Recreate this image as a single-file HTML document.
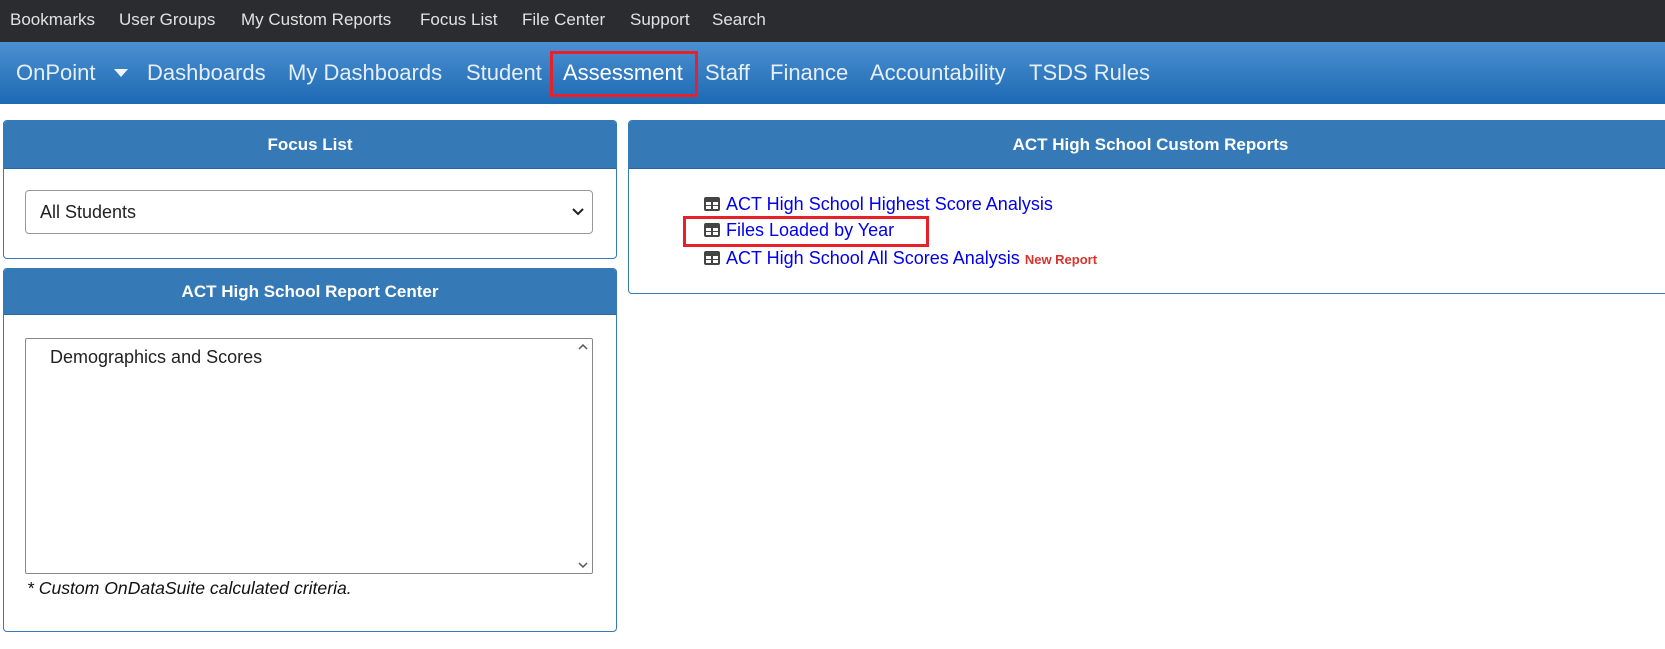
<!DOCTYPE html>
<html><head><style>
*{box-sizing:border-box;margin:0;padding:0}
body{width:1665px;height:649px;background:#fff;font-family:"Liberation Sans",Arial,sans-serif;position:relative;overflow:hidden}
.top{position:absolute;left:0;top:0;width:1665px;height:42px;background:#2b2c30}
.top span{position:absolute;top:10px;color:#e2e2e2;font-size:17px}
.nav{position:absolute;left:0;top:42px;width:1665px;height:62px;background:linear-gradient(#4b90d1,#1d69b3)}
.nav span{position:absolute;top:18px;color:#e6eef8;font-size:22px}
.red{position:absolute;border:3px solid #e8202a}
.panel{position:absolute;border:1px solid #3579b6;border-radius:4px;background:#fff;overflow:hidden}
.ph{background:#357ab6;color:#fff;font-weight:bold;font-size:17px;text-align:center;border-bottom:1px solid #2a66a0}
.sel{position:absolute;border:1px solid #999;border-radius:4px;font-size:18px;color:#222}
a{color:#0000ee;text-decoration:none;font-size:18px}
.ln{position:absolute;left:704px;font-size:18px}
.ic{display:inline-block;width:16px;height:14px;background:#444;border-radius:2px;vertical-align:-1px;margin-right:6px;position:relative}
.ic:after{content:"";position:absolute;left:2px;top:5px;width:12px;height:7px;background:linear-gradient(90deg,#fff 5px,#444 5px,#444 7px,#fff 7px);}
.ic:before{content:"";position:absolute;left:2px;top:8px;width:12px;height:1px;background:#444;z-index:2}
</style></head><body>
<div class="top">
<span style="left:10px">Bookmarks</span><span style="left:119px">User Groups</span><span style="left:241px">My Custom Reports</span><span style="left:420px">Focus List</span><span style="left:522px">File Center</span><span style="left:630px">Support</span><span style="left:712px">Search</span>
</div>
<div class="nav">
<span style="left:16px">OnPoint</span>
<svg style="position:absolute;left:113px;top:26px" width="16" height="10"><path d="M1 1 L15 1 L8 9 Z" fill="#f2f6fb"/></svg>
<span style="left:147px">Dashboards</span><span style="left:288px">My Dashboards</span><span style="left:466px">Student</span><span style="left:563px;color:#fff">Assessment</span><span style="left:705px">Staff</span><span style="left:770px">Finance</span><span style="left:870px">Accountability</span><span style="left:1029px">TSDS Rules</span>
</div>
<div class="red" style="left:550px;top:51px;width:148px;height:46px"></div>

<div class="panel" style="left:3px;top:120px;width:614px;height:139px">
<div class="ph" style="height:48px;line-height:48px">Focus List</div>
</div>
<div class="sel" style="left:25px;top:190px;width:568px;height:44px;line-height:42px;padding-left:14px">All Students
<svg style="position:absolute;right:8px;top:17px" width="12" height="8"><path d="M1 1 L6 6 L11 1" fill="none" stroke="#222" stroke-width="2"/></svg></div>

<div class="panel" style="left:3px;top:268px;width:614px;height:364px">
<div class="ph" style="height:46px;line-height:46px">ACT High School Report Center</div>
</div>
<div class="sel" style="left:25px;top:338px;width:568px;height:236px;border-radius:2px;border-color:#888;padding:8px 24px">Demographics and Scores
<svg style="position:absolute;right:4px;top:4px" width="10" height="7"><path d="M1 6 L5 2 L9 6" fill="none" stroke="#555" stroke-width="1.5"/></svg>
<svg style="position:absolute;right:4px;bottom:4px" width="10" height="7"><path d="M1 1 L5 5 L9 1" fill="none" stroke="#555" stroke-width="1.5"/></svg></div>
<div style="position:absolute;left:27px;top:578px;font-style:italic;font-size:17.6px;color:#111">* Custom OnDataSuite calculated criteria.</div>

<div class="panel" style="left:628px;top:120px;width:1045px;height:174px">
<div class="ph" style="height:48px;line-height:48px">ACT High School Custom Reports</div>
</div>
<div class="ln" style="top:194px"><span class="ic"></span><a>ACT High School Highest Score Analysis</a></div>
<div class="ln" style="top:220px"><span class="ic"></span><a>Files Loaded by Year</a></div>
<div class="ln" style="top:248px"><span class="ic"></span><a>ACT High School All Scores Analysis</a> <span style="color:#d9342b;font-size:13px;font-weight:bold">New Report</span></div>
<div class="red" style="left:683px;top:216px;width:246px;height:31px"></div>
</body></html>
